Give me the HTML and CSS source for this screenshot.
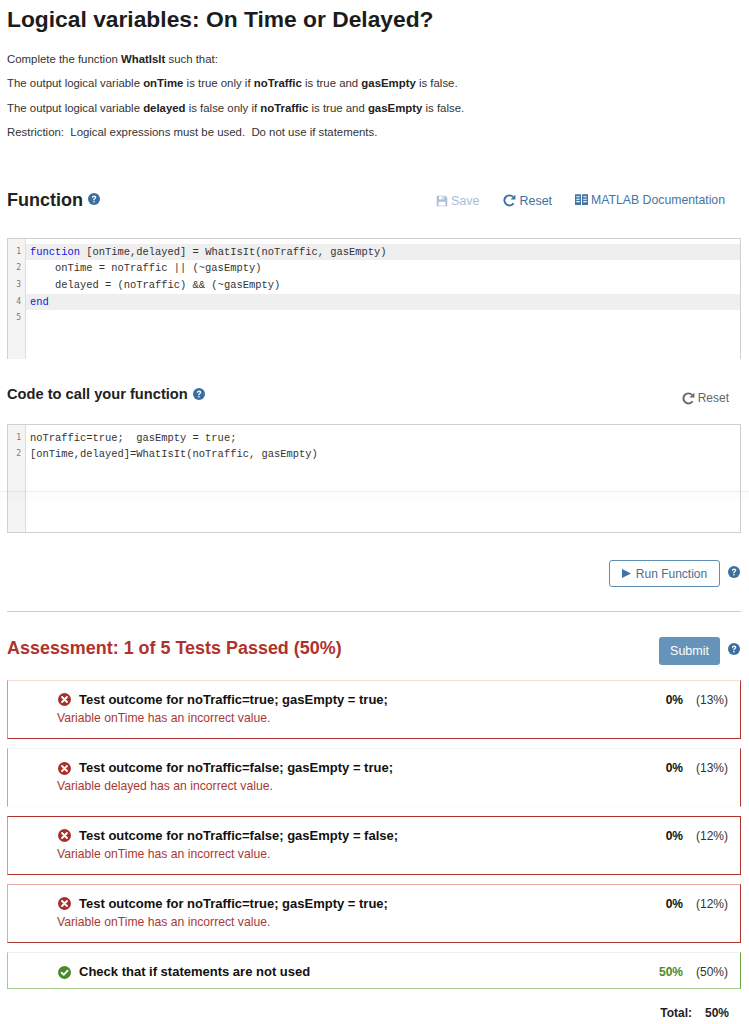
FILE: index.html
```html
<!DOCTYPE html>
<html lang="en">
<head>
<meta charset="utf-8">
<title>Logical variables: On Time or Delayed?</title>
<link rel="stylesheet" href="styles.css">
</head>
<body>
<div class="fold"></div>
<svg class="defs" width="0" height="0" aria-hidden="true">
  <symbol id="help" viewBox="0 0 16 16"><circle cx="8" cy="8" r="8" fill="#3a6f9f"/><path d="M5.2 6.2C5.3 4.5 6.5 3.4 8.2 3.4c1.6 0 2.8 1 2.8 2.4 0 1.2-.7 1.8-1.5 2.3-.6.4-.8.7-.8 1.3v.2H7v-.4c0-1 .4-1.5 1.1-2 .6-.4 1-.7 1-1.3 0-.6-.4-1-1-1-.7 0-1.1.4-1.2 1.3z" fill="#fff"/><rect x="7" y="10.8" width="1.8" height="1.8" fill="#fff"/></symbol>
  <symbol id="fail" viewBox="0 0 16 16"><circle cx="8" cy="8" r="8" fill="#a9302a"/><path d="M5 5l6 6M11 5l-6 6" stroke="#fff" stroke-width="2.4" stroke-linecap="round"/></symbol>
  <symbol id="pass" viewBox="0 0 16 16"><circle cx="8" cy="8" r="8" fill="#4b8a2c"/><path d="M4.4 8.2l2.6 2.6 4.8-5" fill="none" stroke="#fff" stroke-width="2.2" stroke-linecap="round" stroke-linejoin="round"/></symbol>
  <symbol id="reset" viewBox="0 0 16 16"><path d="M13 11.4A6.2 6.2 0 1 1 12.4 3.6" fill="none" stroke="currentColor" stroke-width="2.4"/><path d="M9.2 6.8h6V.8z" fill="currentColor"/></symbol>
</svg>

<h1 class="title">Logical variables: On Time or Delayed?</h1>

<div class="prompt">
  <p>Complete the function <b>WhatIsIt</b> such that:</p>
  <p>The output logical variable <b>onTime</b> is true only if <b>noTraffic</b> is true and <b>gasEmpty</b> is false.</p>
  <p>The output logical variable <b>delayed</b> is false only if <b>noTraffic</b> is true and <b>gasEmpty</b> is false.</p>
  <p>Restriction:&nbsp; Logical expressions must be used.&nbsp; Do not use if statements.</p>
</div>

<div class="section-head fn-head">
  <h2 class="h-large">Function <svg class="help help-fn"><use href="#help"/></svg></h2>
  <div class="tools">
    <span class="tool tool-off">
      <svg class="ico" viewBox="0 0 16 16"><path d="M1 1h11.5L15 3.5V15H1z" fill="currentColor"/><rect x="4" y="1.8" width="7" height="4" fill="#fff"/><rect x="8.4" y="2.4" width="1.6" height="2.8" fill="currentColor"/><rect x="3.4" y="9" width="9.2" height="5.2" fill="#fff"/></svg>Save</span>
    <span class="tool tool-reset"><svg class="ico"><use href="#reset"/></svg>Reset</span>
    <span class="tool tool-doc">
      <svg class="ico ico-doc" viewBox="0 0 16 14"><path d="M0 0h7.4v13H0zM8.6 0H16v13H8.6z" fill="currentColor"/><path d="M1.6 3h4.2M1.6 6h4.2M1.6 9h4.2M10.2 3h4.2M10.2 6h4.2M10.2 9h4.2" stroke="#fff" stroke-width="1.3"/></svg>MATLAB Documentation</span>
  </div>
</div>

<div class="editor editor-fn">
  <div class="gutter"><span>1</span><span>2</span><span>3</span><span>4</span><span>5</span></div>
  <div class="code">
    <div class="ln ln-hi"><i>function</i> [onTime,delayed] = WhatIsIt(noTraffic, gasEmpty)</div>
    <div class="ln">    onTime = noTraffic || (~gasEmpty)</div>
    <div class="ln">    delayed = (noTraffic) &amp;&amp; (~gasEmpty)</div>
    <div class="ln ln-hi"><i>end</i></div>
    <div class="ln"></div>
  </div>
</div>

<div class="section-head call-head">
  <h3 class="h-small">Code to call your function <svg class="help help-call"><use href="#help"/></svg></h3>
  <span class="tool tool-grey"><svg class="ico"><use href="#reset"/></svg>Reset</span>
</div>

<div class="editor editor-call">
  <div class="gutter"><span>1</span><span>2</span></div>
  <div class="code">
    <div class="ln">noTraffic=true;  gasEmpty = true;</div>
    <div class="ln">[onTime,delayed]=WhatIsIt(noTraffic, gasEmpty)</div>
  </div>
</div>

<div class="run-row">
  <button class="btn-run"><svg class="play" viewBox="0 0 10 10"><path d="M0 0l10 5-10 5z" fill="currentColor"/></svg>Run Function</button>
  <svg class="help help-side"><use href="#help"/></svg>
</div>

<hr class="rule">

<div class="assess-head">
  <h2 class="assess-title">Assessment: 1 of 5 Tests Passed (50%)</h2>
  <button class="btn-submit">Submit</button>
  <svg class="help help-side"><use href="#help"/></svg>
</div>

<div class="tests">
  <div class="test test-a">
    <div class="test-main">
      <div class="test-name"><svg class="status"><use href="#fail"/></svg>Test outcome for noTraffic=true; gasEmpty = true;</div>
      <div class="test-msg">Variable onTime has an incorrect value.</div>
    </div>
    <div class="score"><b>0%</b><span>(13%)</span></div>
  </div>
  <div class="test test-b">
    <div class="test-main">
      <div class="test-name"><svg class="status"><use href="#fail"/></svg>Test outcome for noTraffic=false; gasEmpty = true;</div>
      <div class="test-msg">Variable delayed has an incorrect value.</div>
    </div>
    <div class="score"><b>0%</b><span>(13%)</span></div>
  </div>
  <div class="test test-c">
    <div class="test-main">
      <div class="test-name"><svg class="status"><use href="#fail"/></svg>Test outcome for noTraffic=false; gasEmpty = false;</div>
      <div class="test-msg">Variable onTime has an incorrect value.</div>
    </div>
    <div class="score"><b>0%</b><span>(12%)</span></div>
  </div>
  <div class="test test-d">
    <div class="test-main">
      <div class="test-name"><svg class="status"><use href="#fail"/></svg>Test outcome for noTraffic=true; gasEmpty = true;</div>
      <div class="test-msg">Variable onTime has an incorrect value.</div>
    </div>
    <div class="score"><b>0%</b><span>(12%)</span></div>
  </div>
  <div class="test test-ok">
    <div class="test-main">
      <div class="test-name"><svg class="status"><use href="#pass"/></svg>Check that if statements are not used</div>
    </div>
    <div class="score score-ok"><b>50%</b><span>(50%)</span></div>
  </div>
</div>

<div class="total"><b>Total:</b><b>50%</b></div>
</body>
</html>
```
FILE: styles.css
```css
* { box-sizing: border-box; }
html, body { margin: 0; padding: 0; background: #fff; }
body {
  position: relative;
  width: 749px;
  height: 1024px;
  overflow: hidden;
  padding: 0 8px 0 7px;
  font-family: "Liberation Sans", Arial, sans-serif;
  color: #222;
}
.defs { position: absolute; }
.fold {
  position: absolute;
  left: 0; right: 0; top: 491px;
  height: 1px;
  background: rgba(0,0,0,.06);
  box-shadow: 0 3px 8px rgba(0,0,0,.13);
}
.title {
  margin: 0;
  padding-top: 5px;
  font-size: 22.8px;
  line-height: 28px;
  font-weight: bold;
  color: #1c1c1c;
}
.prompt { margin-top: 19px; font-size: 11.4px; line-height: 14px; color: #333; }
.prompt p { margin: 0 0 10.3px; }
.prompt b { color: #222; }

.section-head { display: flex; justify-content: space-between; }
.fn-head { margin-top: 48px; height: 26px; align-items: flex-start; }
.h-large { margin: 0; font-size: 18px; line-height: 26px; font-weight: bold; color: #222; }
.h-small { margin: 0; font-size: 14.66px; line-height: 20px; font-weight: bold; color: #222; }
.help { width: 12px; height: 12px; }
.help-fn { vertical-align: 1px; }
.help-call { vertical-align: -1.5px; margin-left: 1px; }
.tools { display: flex; gap: 23px; padding: 4px 16px 0 0; }
.tool { display: inline-flex; align-items: center; font-size: 12.5px; line-height: 18px; white-space: nowrap; }
.ico { width: 13px; height: 13px; margin-right: 3px; }
.tool-off { color: #a9bfd6; margin: 1px 1px 0 0; }
.tool-off .ico { width: 12px; height: 12px; }
.tool-reset { color: #3f6f9f; margin-top: 1px; }
.tool-doc { color: #4575a5; font-size: 12.25px; }
.ico-doc { width: 13px; height: 12px; margin-right: 3px; }
.tool-grey { color: #666; font-size: 12px; margin: 7px 12px 0 0; }

.editor { display: flex; border: 1px solid #d0d0d0; background: #fff; }
.editor-fn { margin-top: 25px; height: 121px; border-bottom: 0; }
.gutter {
  width: 18px;
  flex: none;
  background: #f4f4f4;
  border-right: 1px solid #ddd;
  padding-top: 5px;
  font-family: "DejaVu Sans Mono", monospace;
  font-size: 8px;
  color: #777;
  text-align: right;
}
.gutter span { display: block; height: 16.6px; line-height: 16.6px; padding-right: 4px; }
.code { flex: 1; padding-top: 5px; }
.ln {
  height: 16.6px;
  line-height: 16.6px;
  padding-left: 4px;
  font-family: "Liberation Mono", monospace;
  font-size: 10.43px;
  color: #333;
  white-space: pre;
}
.ln-hi { background: #efefef; }
.ln i { font-style: normal; color: #1414e6; }

.call-head { margin-top: 25px; height: 22px; }
.editor-call { margin-top: 18px; height: 109px; }

.run-row { display: flex; justify-content: flex-end; align-items: center; margin-top: 27px; height: 28px; gap: 8px; padding-right: 1px; }
.btn-run {
  width: 111px; height: 27px;
  display: flex; align-items: center; justify-content: center;
  background: #fff;
  border: 1px solid #5e8db5;
  border-radius: 3px;
  font: 12px "Liberation Sans", Arial, sans-serif;
  color: #4a6f92;
  padding: 0;
}
.play { width: 9px; height: 9px; color: #3f74a5; margin-right: 5px; }
.help-side { margin: 0 0 4px; }

.rule { margin: 23px 0 0; border: 0; border-top: 1px solid #ccc; width: 734px; }

.assess-head { display: flex; align-items: center; gap: 8px; margin-top: 25px; height: 28px; padding-right: 1px; }
.assess-title { margin: 0 auto 6px 0; font-size: 17.95px; font-weight: bold; color: #b0322b; line-height: 24px; }
.btn-submit {
  width: 61px; height: 28px;
  background: #6593ba;
  border: 0;
  border-radius: 3px;
  color: #fff;
  font: 12.5px "Liberation Sans", Arial, sans-serif;
  padding: 0;
}

.tests { margin-top: 15px; display: flex; flex-direction: column; gap: 9.2px; width: 734px; }
.test {
  height: 59px;
  display: flex;
  justify-content: space-between;
  border: 1px solid #b0322b;
  padding: 11px 12px 0 50px;
}
.test-a { border-top-color: #f7dcd8; border-left-color: #e0908a; }
.test-b { height: 58.5px; border-top-color: #f6f6f6; border-left-color: #dc9a96; border-bottom-color: #fafafa; }
.test-c { border-left-color: #d59a95; }
.test-d { border-top-color: #e6a8a3; border-left-color: #e6a8a3; border-bottom-color: #a83a33; }
.test-ok { height: 37px; border-color: #a6cc8c #6aa842 #a6cc8c #a6cc8c; border-top-color: #f0f0ea; }
.test-name { display: flex; align-items: center; font-size: 13px; font-weight: bold; line-height: 16px; color: #111; }
.status { width: 13px; height: 13px; margin-right: 8px; flex: none; }
.test-msg { font-size: 12.2px; line-height: 16px; margin: 2px 0 0 -1px; color: #a83a34; }
.score { display: flex; gap: 13px; font-size: 12px; line-height: 16px; color: #333; }
.score b { color: #111; }
.score-ok b { color: #4b8a2c; }

.total { display: flex; justify-content: flex-end; gap: 13px; margin-top: 16px; padding-right: 12px; font-size: 12px; line-height: 16px; color: #222; width: 734px; }
```
